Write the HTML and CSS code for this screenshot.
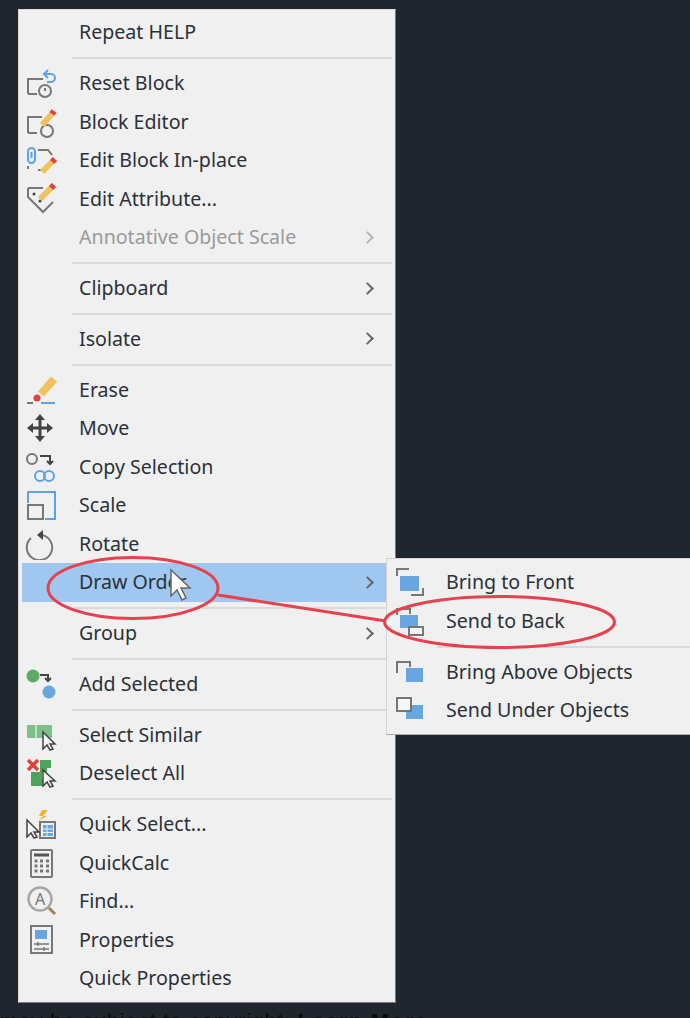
FILE: index.html
```html
<!DOCTYPE html>
<html lang="en">
<head>
    <meta charset="UTF-8">
    <meta name="viewport" content="width=device-width, initial-scale=1.0">
    <title>Draw Order context menu</title>
    <link rel="stylesheet" href="styles.css">
</head>
<body>
    <div class="page">
        <!-- Main context menu -->
        <div class="menu">
            <div class="row"><span class="icon"></span><span class="label">Repeat HELP</span></div>
            <div class="sep"></div>

            <div class="row">
                <svg class="icon" viewBox="0 0 32 32"><path d="M3 27V12h15" class="line"/><path d="M3 27h9" class="line"/><circle cx="20" cy="24" r="6" class="line"/><path d="M20 24v-3" class="line"/><path d="M19 7h7a4 4 0 0 1 0 8h-4M23 3l-4 4 4 4" class="blue"/></svg>
                <span class="label">Reset Block</span>
            </div>
            <div class="row">
                <svg class="icon" viewBox="0 0 32 32"><path d="M3 27V11h14" class="line"/><path d="M3 27h9" class="line"/><circle cx="22" cy="25" r="6" class="line"/><path d="M17 19L27 8" class="pencil"/><path d="M27 8l2-3" class="tip"/></svg>
                <span class="label">Block Editor</span>
            </div>
            <div class="row">
                <svg class="icon" viewBox="0 0 32 32"><rect x="3" y="4" width="7" height="15" rx="3.5" class="blue"/><path d="M6.500 8v6" class="blue"/><path d="M13 6h10l4 5M13 26h6M3 22v3" class="line"/><path d="M17 28L27 18" class="pencil"/><path d="M27 18l3-3" class="tip"/></svg>
                <span class="label">Edit Block In-place</span>
            </div>
            <div class="row">
                <svg class="icon" viewBox="0 0 32 32"><path d="M3 5h15M3 5v9l15 15 10-10" class="line"/><circle cx="9" cy="11" r="1.500" class="dot"/><circle cx="15" cy="18" r="1.500" class="dot"/><path d="M15 16L26 5" class="pencil"/><path d="M26 5l3-3" class="tip"/></svg>
                <span class="label">Edit Attribute...</span>
            </div>
            <div class="row off"><span class="icon"></span><span class="label">Annotative Object Scale</span><span class="more"></span></div>
            <div class="sep"></div>

            <div class="row"><span class="icon"></span><span class="label">Clipboard</span><span class="more"></span></div>
            <div class="sep"></div>

            <div class="row"><span class="icon"></span><span class="label">Isolate</span><span class="more"></span></div>
            <div class="sep"></div>

            <div class="row">
                <svg class="icon" viewBox="0 0 32 32"><path d="M16 20L29 5" class="pencil thick"/><circle cx="12" cy="24" r="3.500" fill="#e2403f"/><path d="M2 29h6" class="line"/><path d="M16 29h14" class="blue"/></svg>
                <span class="label">Erase</span>
            </div>
            <div class="row">
                <svg class="icon" viewBox="0 0 32 32"><path d="M15 6v20M5 16h20" class="line dark heavy"/><path d="M15 2l5 6H10zM15 30l5-6H10zM2 16l6-5v10zM28 16l-6-5v10z" class="dot"/></svg>
                <span class="label">Move</span>
            </div>
            <div class="row">
                <svg class="icon" viewBox="0 0 32 32"><circle cx="7" cy="8" r="5" class="line"/><path d="M15 5h10v7M22 10l3 3 3-3" class="line dark"/><circle cx="15" cy="25" r="5" class="blue"/><circle cx="24" cy="25" r="5" class="blue"/></svg>
                <span class="label">Copy Selection</span>
            </div>
            <div class="row">
                <svg class="icon" viewBox="0 0 32 32"><path d="M3 14V3h27v27H20" class="blue"/><rect x="3" y="16" width="15" height="14" class="line"/></svg>
                <span class="label">Scale</span>
            </div>
            <div class="row">
                <svg class="icon" viewBox="0 0 32 32"><path d="M6 10A12.700 12.700 0 1 0 17 7" class="line"/><path d="M18 2v10l-6-5z" class="dot"/></svg>
                <span class="label">Rotate</span>
            </div>
            <div class="row active"><span class="icon"></span><span class="label">Draw Order</span><span class="more"></span></div>
            <div class="sep"></div>

            <div class="row"><span class="icon"></span><span class="label">Group</span><span class="more"></span></div>
            <div class="sep"></div>

            <div class="row">
                <svg class="icon" viewBox="0 0 32 32"><circle cx="8" cy="8" r="6.500" fill="#5aab64"/><circle cx="24" cy="24" r="6.500" fill="#69a6e0"/><path d="M15 7h8v5M20 10l3 3 3-3" class="line dark"/></svg>
                <span class="label">Add Selected</span>
            </div>
            <div class="sep"></div>

            <div class="row">
                <svg class="icon" viewBox="0 0 32 32"><rect x="2" y="6" width="25" height="13" fill="#7cc08a"/><path d="M11 6v13" stroke="#d8eadb" stroke-width="1.500"/><path d="M18 13v17l4-4 3 5 3-1-3-5h5z" class="cursor"/></svg>
                <span class="label">Select Similar</span>
            </div>
            <div class="row">
                <svg class="icon" viewBox="0 0 32 32"><path d="M3 3l10 10M13 3L3 13" stroke="#e2403f" stroke-width="3.500" fill="none"/><path d="M15 3h11v8h-4v4h-7zM6 15h11v7h3v7H6z" fill="#4ea35a"/><path d="M18 13v16l4-4 3 5 3-1-3-5h5z" class="cursor"/></svg>
                <span class="label">Deselect All</span>
            </div>
            <div class="sep"></div>

            <div class="row">
                <svg class="icon" viewBox="0 0 32 32"><path d="M17 2l-3 6h4l-5 5 9-5h-4l5-6z" fill="#f2b632"/><rect x="15" y="14" width="15" height="16" class="line"/><rect x="18" y="17" width="10" height="11" fill="#69a6e0"/><path d="M18 21h10M18 24.500h10M22 17v11" stroke="#e8f0f8"/><path d="M2 12v17l4-4 3 5 3-1-3-5h5z" class="cursor"/></svg>
                <span class="label">Quick Select...</span>
            </div>
            <div class="row">
                <svg class="icon" viewBox="0 0 32 32"><rect x="6" y="3" width="21" height="27" rx="1" class="line"/><path d="M9 8h15" stroke="#555" stroke-width="3"/><path d="M9.500 14h3M15 14h3M21 14h3M9.500 19h3M15 19h3M21 19h3M9.500 24h3M15 24h3M21 24h3" stroke="#777" stroke-width="3"/></svg>
                <span class="label">QuickCalc</span>
            </div>
            <div class="row">
                <svg class="icon" viewBox="0 0 32 32"><circle cx="15" cy="14" r="11.500" stroke="#a8a8a8" stroke-width="2.500" fill="none"/><text x="15" y="20" class="find">A</text><path d="M24 23l6 6" stroke="#a5834f" stroke-width="3"/></svg>
                <span class="label">Find...</span>
            </div>
            <div class="row">
                <svg class="icon" viewBox="0 0 32 32"><rect x="6" y="2" width="21" height="27" class="line"/><rect x="10" y="6" width="12" height="9" fill="#69a6e0"/><path d="M9 20h15M9 25h15" class="line thin"/><path d="M13 18v4M19 23v4" class="line thin"/></svg>
                <span class="label">Properties</span>
            </div>
            <div class="row"><span class="icon"></span><span class="label">Quick Properties</span></div>

            <!-- Draw Order submenu -->
            <div class="submenu">
                <div class="row">
                    <svg class="icon" viewBox="0 0 32 32"><path d="M3 10V3h12M29 22v7H17" class="line"/><rect x="6" y="10" width="19" height="15" fill="#69a6e0"/></svg>
                    <span class="label">Bring to Front</span>
                </div>
                <div class="row">
                    <svg class="icon" viewBox="0 0 32 32"><path d="M3 10V4h13v5" class="line"/><path d="M6 10h18v13H6z" fill="#69a6e0"/><rect x="15" y="22" width="14" height="8" class="line white"/></svg>
                    <span class="label">Send to Back</span>
                </div>
                <div class="sep"></div>
                <div class="row">
                    <svg class="icon" viewBox="0 0 32 32"><path d="M3 17V6h13v5" class="line"/><rect x="12" y="12" width="17" height="14" fill="#69a6e0"/></svg>
                    <span class="label">Bring Above Objects</span>
                </div>
                <div class="row">
                    <svg class="icon" viewBox="0 0 32 32"><rect x="12" y="11" width="17" height="14" fill="#69a6e0"/><rect x="3" y="4" width="14" height="13" class="line white"/></svg>
                    <span class="label">Send Under Objects</span>
                </div>
            </div>
        </div>

        <p class="caption">may be subject to copyright. <b>Learn More</b></p>

        <!-- Red markup and mouse pointer over the screenshot -->
        <svg class="markup" viewBox="0 0 690 1018">
            <path d="M218 595L386 621" class="mark"/>
            <ellipse cx="133" cy="588" rx="85" ry="30.500" class="mark"/>
            <ellipse cx="499.500" cy="622" rx="115" ry="25.500" class="mark"/>
            <path d="M171 570v26l6-6 5 10 4-2-5-10h9z" fill="#fff" stroke="#666" stroke-width="1.500"/>
        </svg>
    </div>
</body>
</html>
```

FILE: styles.css
```css
*{
    box-sizing: border-box;
}
body{
    margin: 0;
    background-color: #20262e;
}
.page{
    position: relative;
    height: 1018px;
    overflow: hidden;
    padding-top: 9px;
    filter: blur(0.7px);
    font-family: "Noto Sans", "Open Sans", sans-serif;
}
.menu{
    position: relative;
    width: 378px;
    height: 994px;
    margin-left: 18px;
    padding: 3px 3px;
    background-color: #f0f0f0;
    border: 1px solid #8a8a8a;
    border-color: #d8d8d8 #777 #777 #d8d8d8;
}
.row{
    display: flex;
    align-items: center;
    height: 38.5px;
    color: #2b303a;
    font-size: 19.6px;
}
.row .icon{
    flex: none;
    width: 32px;
    height: 32px;
    margin-left: 3px;
}
.label{
    margin-left: 22px;
    padding-bottom: 1px;
    white-space: nowrap;
}
.more{
    width: 9px;
    height: 9px;
    margin-left: auto;
    margin-right: 20px;
    border-top: 2px solid #666;
    border-right: 2px solid #666;
    transform: rotate(45deg);
}
.off{
    color: #9a9a9a;
}
.off .more{
    border-color: #b5b5b5;
}
.active{
    background-color: #9fc7f0;
}
.sep{
    height: 12.375px;
    margin-left: 50px;
    padding-top: 5.5px;
}
.sep::before{
    content: "";
    display: block;
    height: 2px;
    background-color: #d9d9d9;
}
.submenu{
    position: absolute;
    left: 367px;
    top: 548px;
    width: 320px;
    height: 177px;
    padding-top: 4px;
    background-color: #f0f0f0;
    border: 1px solid #d4d4d4;
    border-right: 0;
    border-bottom-color: #aaa;
}
.submenu .row .icon{
    margin-left: 7px;
}
.submenu .label{
    margin-left: 20px;
}
.caption{
    margin: 6px 0 0;
    color: #0a0a0a;
    font-family: "Liberation Sans", sans-serif;
    font-size: 22px;
    letter-spacing: 0.6px;
    white-space: nowrap;
}
.caption b{
    letter-spacing: 1.2px;
}
.markup{
    position: absolute;
    left: 0;
    top: 0;
    width: 690px;
    height: 1018px;
}
.mark{
    fill: none;
    stroke: #e8414e;
    stroke-width: 3;
}

/* icon strokes */
.line{
    fill: none;
    stroke: #777;
    stroke-width: 2;
}
.line.dark{
    stroke: #444;
}
.line.heavy{
    stroke-width: 3;
}
.line.thin{
    stroke-width: 1.5;
}
.line.white{
    fill: #f6f6f6;
}
.blue{
    fill: none;
    stroke: #5ba3e6;
    stroke-width: 2;
}
.dot{
    fill: #444;
}
.pencil{
    fill: none;
    stroke: #eec35e;
    stroke-width: 6;
}
.pencil.thick{
    stroke-width: 8;
}
.tip{
    fill: none;
    stroke: #e2403f;
    stroke-width: 6;
}
.cursor{
    fill: #f4f4f4;
    stroke: #444;
    stroke-width: 1.5;
}
.find{
    fill: #777;
    font-size: 16px;
    text-anchor: middle;
    font-family: "Noto Sans", sans-serif;
}
```
